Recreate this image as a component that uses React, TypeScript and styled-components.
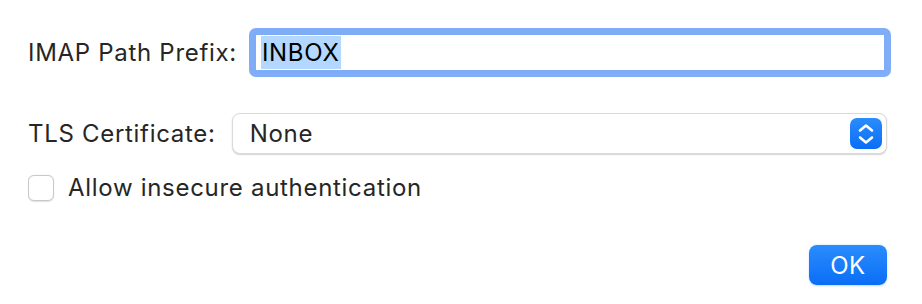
import React from 'react';
import styled, { createGlobalStyle } from 'styled-components';

const GlobalStyle = createGlobalStyle`
  html, body {
    margin: 0;
    padding: 0;
    background: #ffffff;
  }
  body {
    font-family: Inter, "Noto Sans", "Liberation Sans", sans-serif;
    color: #262626;
    -webkit-font-smoothing: antialiased;
  }
`;

const Sheet = styled.div`
  width: 922px;
  height: 304px;
  box-sizing: border-box;
  padding: 32px 35px 0 28px;
  display: flex;
  flex-direction: column;
`;

const Row = styled.div<{ $gap: number; $mt?: number }>`
  display: flex;
  align-items: center;
  gap: ${(p) => p.$gap}px;
  margin-top: ${(p) => p.$mt ?? 0}px;
`;

const Label = styled.span`
  font-size: 24px;
  letter-spacing: 0.7px;
  white-space: nowrap;
`;

const TextField = styled.div`
  flex: 1;
  height: 41px;
  box-sizing: border-box;
  border: 3px solid #7eacf7;
  border-radius: 3px;
  box-shadow: 0 0 0 4px #80adf8;
  background: #fff;
  display: flex;
  align-items: center;
  padding-left: 5px;
`;

const Selected = styled.span`
  background: #b3d7ff;
  color: #000;
  font-size: 24px;
  letter-spacing: 0.7px;
  line-height: 33px;
  padding: 0 1px;
`;

const Select = styled.div`
  flex: 1;
  height: 41px;
  box-sizing: border-box;
  border: 1px solid #dadada;
  border-radius: 8px;
  box-shadow: 0 1px 1.5px rgba(0, 0, 0, 0.18);
  background: #fff;
  display: flex;
  align-items: center;
  justify-content: space-between;
  padding: 0 4px 0 17px;
`;

const Stepper = styled.div`
  width: 32px;
  height: 31px;
  border-radius: 7px;
  background: linear-gradient(#2a8cfd, #0a6ef6);
  display: flex;
  align-items: center;
  justify-content: center;
`;

const Checkbox = styled.div`
  width: 26px;
  height: 26px;
  box-sizing: border-box;
  border: 1px solid #c8c8c8;
  border-radius: 6px;
  background: #fff;
  box-shadow: 0 0.5px 1px rgba(0, 0, 0, 0.12);
`;

const Footer = styled.div`
  display: flex;
  justify-content: flex-end;
  margin-top: 43px;
`;

const OkButton = styled.button`
  width: 78px;
  height: 40px;
  border: none;
  border-radius: 8px;
  background: linear-gradient(#2a8cfd, #0a6ef6);
  color: #fff;
  font-family: inherit;
  font-size: 24px;
  letter-spacing: 0.6px;
  box-shadow: 0 0.5px 2px rgba(0, 90, 255, 0.25);
  padding: 0;
`;

export default function App() {
  return (
    <>
      <GlobalStyle />
      <Sheet>
        <Row $gap={16}>
          <Label>IMAP Path Prefix:</Label>
          <TextField>
            <Selected>INBOX</Selected>
          </TextField>
        </Row>
        <Row $gap={16} $mt={40}>
          <Label>TLS Certificate:</Label>
          <Select>
            <Label>None</Label>
            <Stepper>
              <svg width="18" height="22" viewBox="0 0 18 22" fill="none">
                <path d="M3 7.5 L9 2.5 L15 7.5" stroke="#fff" strokeWidth="2.6" strokeLinecap="round" strokeLinejoin="round" />
                <path d="M3 14.5 L9 19.5 L15 14.5" stroke="#fff" strokeWidth="2.6" strokeLinecap="round" strokeLinejoin="round" />
              </svg>
            </Stepper>
          </Select>
        </Row>
        <Row $gap={14} $mt={19}>
          <Checkbox />
          <Label>Allow insecure authentication</Label>
        </Row>
        <Footer>
          <OkButton>OK</OkButton>
        </Footer>
      </Sheet>
    </>
  );
}
